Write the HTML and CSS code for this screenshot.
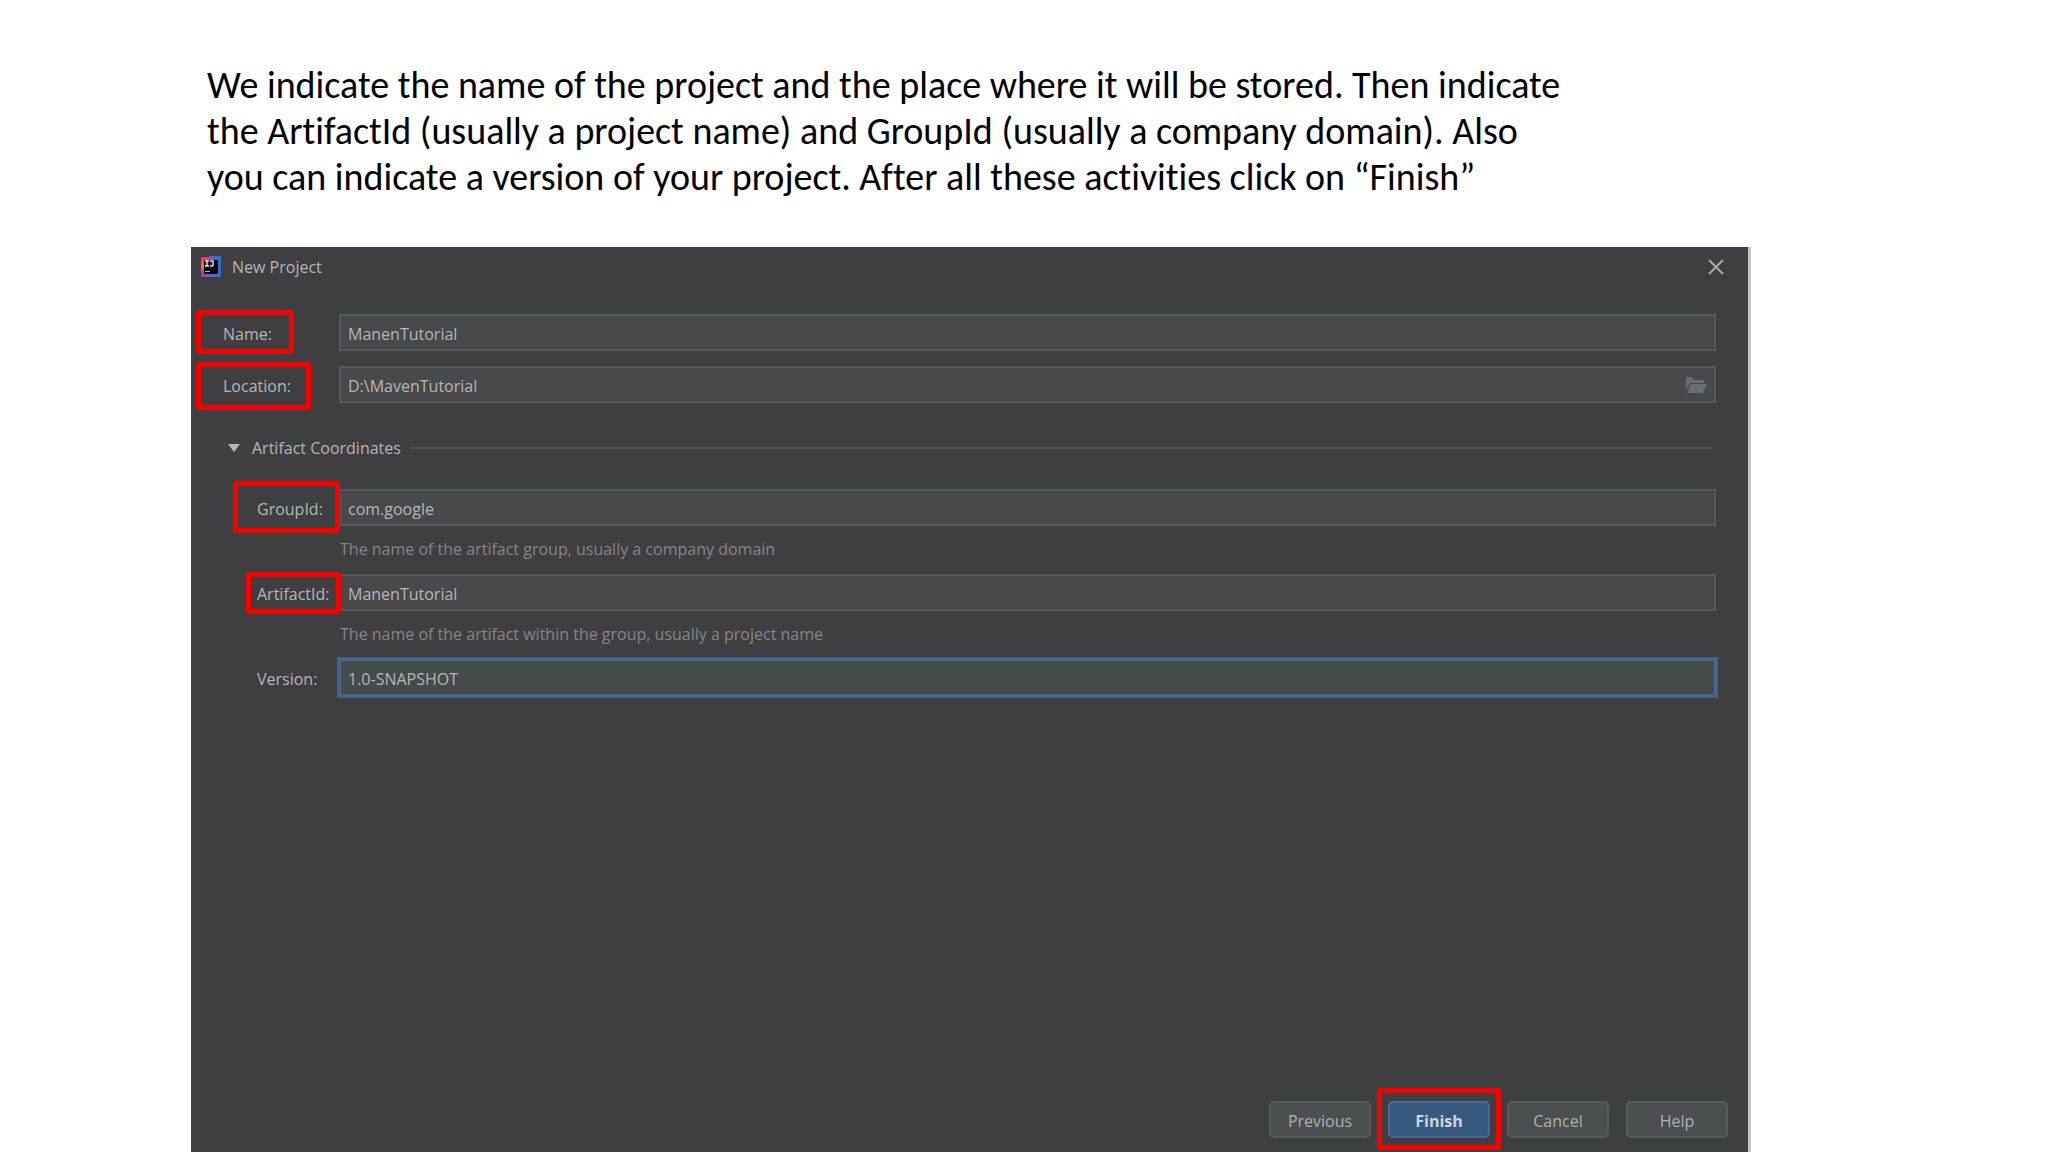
FILE: index.html
```html
<!DOCTYPE html>
<html lang="en">
<head>
    <meta charset="UTF-8">
    <meta name="viewport" content="width=device-width, initial-scale=1.0">
    <title>New Project</title>
    <link rel="stylesheet" href="styles.css">
</head>
<body>
    <p class="intro">
        We indicate the name of the project and the place where it will be stored. Then indicate<br>
        the ArtifactId (usually a project name) and GroupId (usually a company domain). Also<br>
        you can indicate a version of your project. After all these activities click on “Finish”
    </p>

    <main class="dialog">
        <header class="titlebar">
            <svg class="logo" viewBox="0 0 22 22" aria-hidden="true">
                <defs>
                    <linearGradient id="left" x1="0" y1="0" x2="0" y2="1">
                        <stop offset="0" stop-color="#e8305f"/>
                        <stop offset="0.5" stop-color="#f0763a"/>
                        <stop offset="0.75" stop-color="#b03cb4"/>
                        <stop offset="1" stop-color="#7a4fd0"/>
                    </linearGradient>
                    <linearGradient id="right" x1="0" y1="0" x2="1" y2="0">
                        <stop offset="0" stop-color="#b04ab0"/>
                        <stop offset="0.5" stop-color="#4a66d8"/>
                        <stop offset="1" stop-color="#2a70cc"/>
                    </linearGradient>
                </defs>
                <path d="M1 1h10v20H1z" fill="url(#left)"/>
                <path d="M9 0h12v21H5l4-6z" fill="url(#right)"/>
                <path d="M4 4h14v14H4z" fill="#08080a"/>
                <path d="M5 5h4M7 5v5M5 10h4M10 5h3v4q0 1-1 1h-2" fill="none" stroke="#e8e8e8" stroke-width="1.4"/>
                <path d="M5 15.500h5" stroke="#b8b8b8"/>
            </svg>
            <h1>New Project</h1>
            <button type="button" class="close" aria-label="Close">
                <svg viewBox="0 0 16 16"><path d="M1 1l14 14M15 1L1 15"/></svg>
            </button>
        </header>

        <form id="project">
            <div class="row">
                <label class="marked mark-name" for="name">Name:</label>
                <input type="text" id="name" value="ManenTutorial">
            </div>
            <div class="row">
                <label class="marked mark-location" for="location">Location:</label>
                <div class="path">
                    <input type="text" id="location" value="D:\MavenTutorial">
                    <button type="button" class="browse" aria-label="Browse">
                        <svg viewBox="0 0 22 18"><path d="M1 14V1h6l2 3h10v3H5z"/><path d="M6 8h16l-4 9H2z"/></svg>
                    </button>
                </div>
            </div>

            <h2><span class="arrow"></span>Artifact Coordinates</h2>

            <div class="row nested">
                <label class="marked mark-group" for="group">GroupId:</label>
                <input type="text" id="group" value="com.google">
            </div>
            <p class="hint">The name of the artifact group, usually a company domain</p>
            <div class="row nested">
                <label class="marked mark-artifact" for="artifact">ArtifactId:</label>
                <input type="text" id="artifact" value="ManenTutorial">
            </div>
            <p class="hint">The name of the artifact within the group, usually a project name</p>
            <div class="row nested">
                <label for="version">Version:</label>
                <input type="text" id="version" class="active" value="1.0-SNAPSHOT">
            </div>
        </form>

        <footer class="actions">
            <button type="button">Previous</button>
            <button type="submit" form="project" class="primary marked">Finish</button>
            <button type="button">Cancel</button>
            <button type="button">Help</button>
        </footer>
    </main>
</body>
</html>
```

FILE: styles.css
```css
* {
    box-sizing: border-box;
}
body {
    display: flex;
    flex-direction: column;
    min-height: 100vh;
    margin: 0;
    background-color: #fff;
    font-family: "Open Sans", "Noto Sans", sans-serif;
}
.intro {
    margin: 0;
    padding: 62px 207px 47px;
    font-family: Carlito, Calibri, Lato, sans-serif;
    font-size: 38px;
    font-variant-ligatures: none;
    line-height: 46px;
    color: #000;
    white-space: nowrap;
}

/* dialog window */
.dialog {
    flex: 1;
    display: flex;
    flex-direction: column;
    margin: 0 297px 0 191px;
    padding: 0 32px 14px 0;
    border-right: 3px solid #c4c4c4;
    background-color: #3f3f41;
    font-size: 16px;
    color: #b6b6b6;
}
.titlebar {
    display: flex;
    align-items: center;
    height: 40px;
    padding-left: 9px;
}
.logo {
    width: 22px;
    height: 22px;
}
h1 {
    margin: 0 auto 0 10px;
    font-size: 16px;
    font-weight: normal;
}
.close {
    width: 16px;
    height: 16px;
    margin-right: -8px;
    padding: 0;
    border: none;
    background: none;
}
.close svg, .browse svg {
    display: block;
    width: 100%;
}
.close path {
    stroke: #a8a8a8;
    stroke-width: 2;
}

/* form */
form {
    padding-top: 27px;
}
.row {
    display: grid;
    grid-template-columns: 148px 1fr;
    align-items: center;
    height: 37px;
    margin-bottom: 15px;
}
label {
    justify-self: start;
    margin-left: 32px;
    padding-top: 2px;
}
.nested label {
    margin-left: 66px;
}
input {
    width: 100%;
    height: 37px;
    padding: 2px 7px 0;
    border: 2px solid #58595b;
    border-radius: 0;
    background-color: #47494b;
    font: inherit;
    color: #b6b6b6;
    outline: none;
}
input.active {
    border-color: #45698c;
    background-color: #454b4b;
    box-shadow: 0 0 0 2px #41648a;
}
.path {
    position: relative;
}
.browse {
    position: absolute;
    top: 10px;
    right: 9px;
    width: 22px;
    height: 18px;
    padding: 0;
    border: none;
    background: none;
}
.browse path {
    fill: #667072;
}
h2 {
    display: flex;
    align-items: center;
    height: 24px;
    margin: 33px 4px 29px 37px;
    font-size: 16px;
    font-weight: normal;
}
h2::after {
    content: "";
    flex: 1;
    height: 2px;
    margin-left: 10px;
    background-color: #525355;
}
.arrow {
    margin-right: 12px;
    border: 6px solid transparent;
    border-top: 8px solid #b6b6b6;
    border-bottom: none;
}
.hint {
    height: 24px;
    margin: -4px 0 13px 149px;
    line-height: 24px;
    color: #858687;
}

/* red frames around the fields to fill in */
.marked {
    position: relative;
}
.marked::after {
    content: "";
    position: absolute;
    inset: -15px -13px -14px;
    border: 5px solid #f80000;
    border-radius: 3px;
}
.mark-name::after {
    inset: -11px -22px -9px -27px;
}
.mark-location::after {
    inset: -11px -20px -13px -27px;
}
.mark-group::after {
    inset: -15px -17px -13px -24px;
}
.mark-artifact::after {
    inset: -9px -11px;
}

/* bottom buttons */
.actions {
    display: flex;
    justify-content: flex-end;
    gap: 17px;
    margin: auto -12px 0 0;
}
.actions button {
    width: 102px;
    height: 37px;
    padding: 2px 0 0;
    border: 2px solid #585b5b;
    border-radius: 5px;
    background-color: #4b4f4f;
    font: inherit;
    color: #b0b0b0;
}
.actions .primary {
    border-color: #44699a;
    background-color: #375980;
    font-weight: bold;
    color: #d0d4d8;
}
```
